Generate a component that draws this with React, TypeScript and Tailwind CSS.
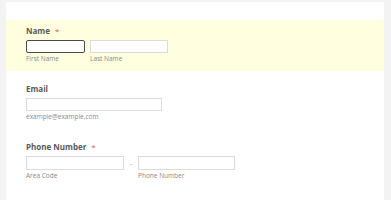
const labelCls = "text-[8px] leading-[12px] font-bold text-[#5a5a5a]";
const subCls = "text-[6.5px] leading-[11px] text-[#8a8a8a]";
const inputCls = "h-[13px] border border-[#dcdcdc] bg-white";

function Req() {
  return <span className="ml-[5px] text-[8px] font-normal text-[#f05050]">*</span>;
}

export default function App() {
  return (
    <div
      className="min-h-[200px] bg-[#f3f3f3] pt-[2px] pl-[6px] pr-[7px]"
      style={{ fontFamily: '"Open Sans", "Liberation Sans", sans-serif' }}
    >
      <div className="bg-white pt-[18px] h-[198px]">
        <section className="bg-[#fffedf] px-[20px] pt-[5px] pb-[7px]">
          <div className={labelCls}>
            Name
            <Req />
          </div>
          <div className="mt-[3px] flex gap-[5px]">
            <div className="flex flex-col">
              <div className="h-[13px] w-[59px] rounded-[2px] border-[1.5px] border-[#4a4a4a] bg-white" />
              <span className={subCls}>First Name</span>
            </div>
            <div className="flex flex-col">
              <div className={`${inputCls} w-[78px]`} />
              <span className={subCls}>Last Name</span>
            </div>
          </div>
        </section>

        <section className="px-[20px] pt-[12px] pb-[7px]">
          <div className={labelCls}>Email</div>
          <div className="mt-[3px] flex flex-col">
            <div className={`${inputCls} w-[136px]`} />
            <span className={subCls}>example@example.com</span>
          </div>
        </section>

        <section className="px-[20px] pt-[12px] pb-[8px]">
          <div className={labelCls}>
            Phone Number
            <Req />
          </div>
          <div className="mt-[3px] flex">
            <div className="flex flex-col">
              <div className={`${inputCls} h-[14px] w-[98px]`} />
              <span className={subCls}>Area Code</span>
            </div>
            <span className="w-[14px] text-center text-[8px] leading-[14px] text-[#aaa]">-</span>
            <div className="flex flex-col">
              <div className={`${inputCls} h-[14px] w-[97px]`} />
              <span className={subCls}>Phone Number</span>
            </div>
          </div>
        </section>
      </div>
    </div>
  );
}
